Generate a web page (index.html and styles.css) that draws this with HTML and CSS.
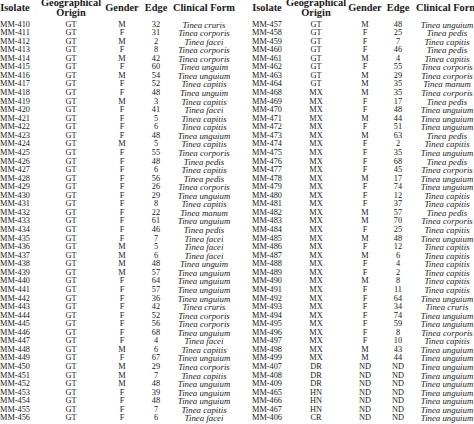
FILE: index.html
```html
<!DOCTYPE html>
<html lang="en">
<head>
<meta charset="utf-8">
<title>Isolates</title>
<link rel="stylesheet" href="styles.css">
</head>
<body>
<div class="data">
<div class="row head"><span><b>Isolate</b></span><span><b>Geographical<br>Origin</b></span><span><b>Gender</b></span><span><b>Edge</b></span><span><b>Clinical Form</b></span><span><b>Isolate</b></span><span><b>Geographical<br>Origin</b></span><span><b>Gender</b></span><span><b>Edge</b></span><span><b>Clinical Form</b></span></div>
<div class="row"><span>MM-410</span><span>GT</span><span>M</span><span>32</span><span class="f">Tinea cruris</span><span>MM-457</span><span>GT</span><span>M</span><span>48</span><span class="f">Tinea unguium</span></div>
<div class="row"><span>MM-411</span><span>GT</span><span>F</span><span>31</span><span class="f">Tinea corporis</span><span>MM-458</span><span>GT</span><span>F</span><span>25</span><span class="f">Tinea pedis</span></div>
<div class="row"><span>MM-412</span><span>GT</span><span>M</span><span>2</span><span class="f">Tinea facei</span><span>MM-459</span><span>GT</span><span>F</span><span>7</span><span class="f">Tinea capitis</span></div>
<div class="row"><span>MM-413</span><span>GT</span><span>F</span><span>8</span><span class="f">Tinea corporis</span><span>MM-460</span><span>GT</span><span>F</span><span>46</span><span class="f">Tinea pedis</span></div>
<div class="row"><span>MM-414</span><span>GT</span><span>M</span><span>42</span><span class="f">Tinea corporis</span><span>MM-461</span><span>GT</span><span>M</span><span>4</span><span class="f">Tinea capitis</span></div>
<div class="row"><span>MM-415</span><span>GT</span><span>F</span><span>60</span><span class="f">Tinea unguim</span><span>MM-462</span><span>GT</span><span>F</span><span>55</span><span class="f">Tinea corporis</span></div>
<div class="row"><span>MM-416</span><span>GT</span><span>M</span><span>54</span><span class="f">Tinea unguium</span><span>MM-463</span><span>GT</span><span>M</span><span>29</span><span class="f">Tinea corporis</span></div>
<div class="row"><span>MM-417</span><span>GT</span><span>F</span><span>52</span><span class="f">Tinea capitis</span><span>MM-464</span><span>GT</span><span>M</span><span>35</span><span class="f">Tinea manum</span></div>
<div class="row"><span>MM-418</span><span>GT</span><span>F</span><span>48</span><span class="f">Tinea unguim</span><span>MM-468</span><span>MX</span><span>M</span><span>35</span><span class="f">Tinea corporis</span></div>
<div class="row"><span>MM-419</span><span>GT</span><span>M</span><span>3</span><span class="f">Tinea capitis</span><span>MM-469</span><span>MX</span><span>F</span><span>17</span><span class="f">Tinea pedis</span></div>
<div class="row"><span>MM-420</span><span>GT</span><span>F</span><span>41</span><span class="f">Tinea facei</span><span>MM-470</span><span>MX</span><span>F</span><span>48</span><span class="f">Tinea unguium</span></div>
<div class="row"><span>MM-421</span><span>GT</span><span>F</span><span>5</span><span class="f">Tinea capitis</span><span>MM-471</span><span>MX</span><span>M</span><span>44</span><span class="f">Tinea unguium</span></div>
<div class="row"><span>MM-422</span><span>GT</span><span>F</span><span>6</span><span class="f">Tinea capitis</span><span>MM-472</span><span>MX</span><span>F</span><span>51</span><span class="f">Tinea unguium</span></div>
<div class="row"><span>MM-423</span><span>GT</span><span>F</span><span>48</span><span class="f">Tinea unguium</span><span>MM-473</span><span>MX</span><span>M</span><span>63</span><span class="f">Tinea pedis</span></div>
<div class="row"><span>MM-424</span><span>GT</span><span>M</span><span>5</span><span class="f">Tinea capitis</span><span>MM-474</span><span>MX</span><span>F</span><span>2</span><span class="f">Tinea capitis</span></div>
<div class="row"><span>MM-425</span><span>GT</span><span>F</span><span>55</span><span class="f">Tinea corporis</span><span>MM-475</span><span>MX</span><span>F</span><span>35</span><span class="f">Tinea unguium</span></div>
<div class="row"><span>MM-426</span><span>GT</span><span>F</span><span>48</span><span class="f">Tinea pedis</span><span>MM-476</span><span>MX</span><span>F</span><span>68</span><span class="f">Tinea pedis</span></div>
<div class="row"><span>MM-427</span><span>GT</span><span>F</span><span>6</span><span class="f">Tinea capitis</span><span>MM-477</span><span>MX</span><span>F</span><span>45</span><span class="f">Tinea corporis</span></div>
<div class="row"><span>MM-428</span><span>GT</span><span>F</span><span>56</span><span class="f">Tinea pedis</span><span>MM-478</span><span>MX</span><span>M</span><span>17</span><span class="f">Tinea unguium</span></div>
<div class="row"><span>MM-429</span><span>GT</span><span>F</span><span>26</span><span class="f">Tinea corporis</span><span>MM-479</span><span>MX</span><span>F</span><span>74</span><span class="f">Tinea unguium</span></div>
<div class="row"><span>MM-430</span><span>GT</span><span>F</span><span>29</span><span class="f">Tinea unguium</span><span>MM-480</span><span>MX</span><span>F</span><span>12</span><span class="f">Tinea capitis</span></div>
<div class="row"><span>MM-431</span><span>GT</span><span>F</span><span>8</span><span class="f">Tinea capitis</span><span>MM-481</span><span>MX</span><span>F</span><span>37</span><span class="f">Tinea capitis</span></div>
<div class="row"><span>MM-432</span><span>GT</span><span>F</span><span>22</span><span class="f">Tinea manum</span><span>MM-482</span><span>MX</span><span>M</span><span>57</span><span class="f">Tinea pedis</span></div>
<div class="row"><span>MM-433</span><span>GT</span><span>F</span><span>61</span><span class="f">Tinea unguium</span><span>MM-483</span><span>MX</span><span>M</span><span>70</span><span class="f">Tinea corporis</span></div>
<div class="row"><span>MM-434</span><span>GT</span><span>F</span><span>46</span><span class="f">Tinea pedis</span><span>MM-484</span><span>MX</span><span>F</span><span>25</span><span class="f">Tinea capitis</span></div>
<div class="row"><span>MM-435</span><span>GT</span><span>F</span><span>7</span><span class="f">Tinea facei</span><span>MM-485</span><span>MX</span><span>M</span><span>48</span><span class="f">Tinea unguium</span></div>
<div class="row"><span>MM-436</span><span>GT</span><span>M</span><span>5</span><span class="f">Tinea facei</span><span>MM-486</span><span>MX</span><span>F</span><span>12</span><span class="f">Tinea capitis</span></div>
<div class="row"><span>MM-437</span><span>GT</span><span>M</span><span>6</span><span class="f">Tinea facei</span><span>MM-487</span><span>MX</span><span>M</span><span>6</span><span class="f">Tinea capitis</span></div>
<div class="row"><span>MM-438</span><span>GT</span><span>M</span><span>48</span><span class="f">Tinea unguim</span><span>MM-488</span><span>MX</span><span>F</span><span>4</span><span class="f">Tinea capitis</span></div>
<div class="row"><span>MM-439</span><span>GT</span><span>M</span><span>57</span><span class="f">Tinea unguium</span><span>MM-489</span><span>MX</span><span>F</span><span>2</span><span class="f">Tinea capitis</span></div>
<div class="row"><span>MM-440</span><span>GT</span><span>F</span><span>64</span><span class="f">Tinea unguium</span><span>MM-490</span><span>MX</span><span>M</span><span>8</span><span class="f">Tinea capitis</span></div>
<div class="row"><span>MM-441</span><span>GT</span><span>F</span><span>57</span><span class="f">Tinea unguium</span><span>MM-491</span><span>MX</span><span>F</span><span>11</span><span class="f">Tinea capitis</span></div>
<div class="row"><span>MM-442</span><span>GT</span><span>F</span><span>36</span><span class="f">Tinea unguium</span><span>MM-492</span><span>MX</span><span>F</span><span>64</span><span class="f">Tinea unguium</span></div>
<div class="row"><span>MM-443</span><span>GT</span><span>F</span><span>42</span><span class="f">Tinea cruris</span><span>MM-493</span><span>MX</span><span>F</span><span>34</span><span class="f">Tinea cruris</span></div>
<div class="row"><span>MM-444</span><span>GT</span><span>F</span><span>52</span><span class="f">Tinea corporis</span><span>MM-494</span><span>MX</span><span>F</span><span>74</span><span class="f">Tinea unguium</span></div>
<div class="row"><span>MM-445</span><span>GT</span><span>F</span><span>56</span><span class="f">Tinea corporis</span><span>MM-495</span><span>MX</span><span>F</span><span>59</span><span class="f">Tinea unguium</span></div>
<div class="row"><span>MM-446</span><span>GT</span><span>F</span><span>68</span><span class="f">Tinea unguium</span><span>MM-496</span><span>MX</span><span>F</span><span>8</span><span class="f">Tinea corporis</span></div>
<div class="row"><span>MM-447</span><span>GT</span><span>F</span><span>4</span><span class="f">Tinea facei</span><span>MM-497</span><span>MX</span><span>F</span><span>10</span><span class="f">Tinea capitis</span></div>
<div class="row"><span>MM-448</span><span>GT</span><span>M</span><span>6</span><span class="f">Tinea capitis</span><span>MM-498</span><span>MX</span><span>M</span><span>43</span><span class="f">Tinea unguium</span></div>
<div class="row"><span>MM-449</span><span>GT</span><span>F</span><span>67</span><span class="f">Tinea unguium</span><span>MM-499</span><span>MX</span><span>M</span><span>44</span><span class="f">Tinea unguium</span></div>
<div class="row"><span>MM-450</span><span>GT</span><span>M</span><span>29</span><span class="f">Tinea corporis</span><span>MM-407</span><span>DR</span><span>ND</span><span>ND</span><span class="f">Tinea unguium</span></div>
<div class="row"><span>MM-451</span><span>GT</span><span>M</span><span>7</span><span class="f">Tinea capitis</span><span>MM-408</span><span>DR</span><span>ND</span><span>ND</span><span class="f">Tinea unguium</span></div>
<div class="row"><span>MM-452</span><span>GT</span><span>M</span><span>48</span><span class="f">Tinea unguium</span><span>MM-409</span><span>DR</span><span>ND</span><span>ND</span><span class="f">Tinea unguium</span></div>
<div class="row"><span>MM-453</span><span>GT</span><span>F</span><span>39</span><span class="f">Tinea unguium</span><span>MM-465</span><span>HN</span><span>ND</span><span>ND</span><span class="f">Tinea unguium</span></div>
<div class="row"><span>MM-454</span><span>GT</span><span>F</span><span>48</span><span class="f">Tinea unguium</span><span>MM-466</span><span>HN</span><span>ND</span><span>ND</span><span class="f">Tinea unguium</span></div>
<div class="row"><span>MM-455</span><span>GT</span><span>F</span><span>7</span><span class="f">Tinea capitis</span><span>MM-467</span><span>HN</span><span>ND</span><span>ND</span><span class="f">Tinea unguium</span></div>
<div class="row"><span>MM-456</span><span>GT</span><span>F</span><span>6</span><span class="f">Tinea facei</span><span>MM-406</span><span>CR</span><span>ND</span><span>ND</span><span class="f">Tinea unguium</span></div>
</div>
</body>
</html>
```
FILE: styles.css
```css
html, body {
  margin: 0;
  padding: 0;
  background: #ffffff;
  overflow: hidden;
}

body {
  width: 474px;
  height: 424px;
  font-family: "Liberation Serif", "Times New Roman", serif;
  color: #202020;
}

.data {
  width: 502px;
  margin: -2px 0 0 -10px;
}

.row {
  display: grid;
  grid-template-columns: 50px 62px 40px 28px 68px 58px 40px 58px 8px 90px;
  height: 8.57px;
  font-size: 8.3px;
  line-height: 8.57px;
}

.row > span {
  display: flex;
  justify-content: center;
  align-items: center;
  white-space: nowrap;
  min-width: 0;
}

.row > .f {
  font-style: italic;
  font-size: 8.8px;
}

.row.head {
  height: 22.5px;
  font-size: 10.4px;
  line-height: 10px;
}

.row.head b {
  display: block;
  text-align: center;
  font-weight: bold;
  margin-top: -2.5px;
}
```
